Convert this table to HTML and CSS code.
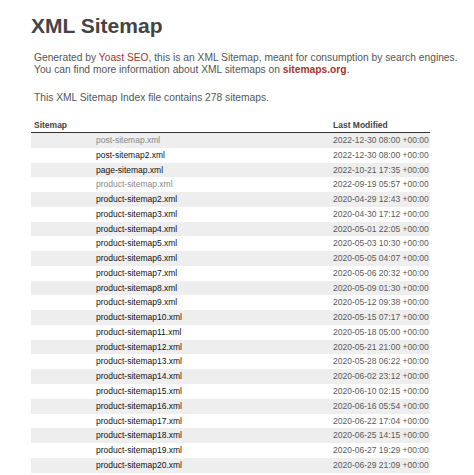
FILE: index.html
```html
<!DOCTYPE html>
<html>
<head>
<meta charset="utf-8">
<title>XML Sitemap</title>
<link rel="stylesheet" href="styles.css">
</head>
<body>
<div class="page">
  <h1 class="title">XML Sitemap</h1>
  <p class="intro">Generated by <a class="brand" href="#">Yoast SEO</a>, this is an XML Sitemap, meant for consumption by search engines.<br>You can find more information about XML sitemaps on <a class="brand strong" href="#">sitemaps.org</a>.</p>
  <p class="count">This XML Sitemap Index file contains 278 sitemaps.</p>
  <table class="sitemap">
    <thead>
      <tr><th class="col-loc">Sitemap</th><th class="col-mod">Last Modified</th></tr>
    </thead>
    <tbody>
      <tr><td class="loc"><a class="visited" href="#">post-sitemap.xml</a></td><td class="mod">2022-12-30 08:00 +00:00</td></tr>
      <tr><td class="loc"><a href="#">post-sitemap2.xml</a></td><td class="mod">2022-12-30 08:00 +00:00</td></tr>
      <tr><td class="loc"><a href="#">page-sitemap.xml</a></td><td class="mod">2022-10-21 17:35 +00:00</td></tr>
      <tr><td class="loc"><a class="visited" href="#">product-sitemap.xml</a></td><td class="mod">2022-09-19 05:57 +00:00</td></tr>
      <tr><td class="loc"><a href="#">product-sitemap2.xml</a></td><td class="mod">2020-04-29 12:43 +00:00</td></tr>
      <tr><td class="loc"><a href="#">product-sitemap3.xml</a></td><td class="mod">2020-04-30 17:12 +00:00</td></tr>
      <tr><td class="loc"><a href="#">product-sitemap4.xml</a></td><td class="mod">2020-05-01 22:05 +00:00</td></tr>
      <tr><td class="loc"><a href="#">product-sitemap5.xml</a></td><td class="mod">2020-05-03 10:30 +00:00</td></tr>
      <tr><td class="loc"><a href="#">product-sitemap6.xml</a></td><td class="mod">2020-05-05 04:07 +00:00</td></tr>
      <tr><td class="loc"><a href="#">product-sitemap7.xml</a></td><td class="mod">2020-05-06 20:32 +00:00</td></tr>
      <tr><td class="loc"><a href="#">product-sitemap8.xml</a></td><td class="mod">2020-05-09 01:30 +00:00</td></tr>
      <tr><td class="loc"><a href="#">product-sitemap9.xml</a></td><td class="mod">2020-05-12 09:38 +00:00</td></tr>
      <tr><td class="loc"><a href="#">product-sitemap10.xml</a></td><td class="mod">2020-05-15 07:17 +00:00</td></tr>
      <tr><td class="loc"><a href="#">product-sitemap11.xml</a></td><td class="mod">2020-05-18 05:00 +00:00</td></tr>
      <tr><td class="loc"><a href="#">product-sitemap12.xml</a></td><td class="mod">2020-05-21 21:00 +00:00</td></tr>
      <tr><td class="loc"><a href="#">product-sitemap13.xml</a></td><td class="mod">2020-05-28 06:22 +00:00</td></tr>
      <tr><td class="loc"><a href="#">product-sitemap14.xml</a></td><td class="mod">2020-06-02 23:12 +00:00</td></tr>
      <tr><td class="loc"><a href="#">product-sitemap15.xml</a></td><td class="mod">2020-06-10 02:15 +00:00</td></tr>
      <tr><td class="loc"><a href="#">product-sitemap16.xml</a></td><td class="mod">2020-06-16 05:54 +00:00</td></tr>
      <tr><td class="loc"><a href="#">product-sitemap17.xml</a></td><td class="mod">2020-06-22 17:04 +00:00</td></tr>
      <tr><td class="loc"><a href="#">product-sitemap18.xml</a></td><td class="mod">2020-06-25 14:15 +00:00</td></tr>
      <tr><td class="loc"><a href="#">product-sitemap19.xml</a></td><td class="mod">2020-06-27 19:29 +00:00</td></tr>
      <tr><td class="loc"><a href="#">product-sitemap20.xml</a></td><td class="mod">2020-06-29 21:09 +00:00</td></tr>
    </tbody>
  </table>
</div>
</body>
</html>
```

FILE: styles.css
```css
html, body {
  margin: 0;
  padding: 0;
  background: #fff;
}

body {
  font-family: "Liberation Sans", Arial, sans-serif;
  color: #555;
  overflow: hidden;
}

.page {
  padding: 14px 0 0 31px;
}

.title {
  margin: 0;
  font-size: 21px;
  line-height: 24px;
  font-weight: bold;
  color: #444;
}

.intro {
  margin: 14px 0 0 3px;
  font-size: 10.25px;
  line-height: 12px;
  color: #555;
}

.count {
  margin: 16px 0 0 3px;
  font-size: 10.25px;
  line-height: 12px;
  color: #555;
}

.brand {
  color: #a8332f;
  text-decoration: none;
}

.strong {
  font-weight: bold;
}

.sitemap {
  margin-top: 15px;
  width: 399px;
  border-collapse: collapse;
  border-spacing: 0;
}

.sitemap th {
  text-align: left;
  font-size: 8.5px;
  line-height: 13px;
  font-weight: bold;
  color: #444;
  border-bottom: 1px solid #333;
  padding: 0;
}

.col-loc {
  width: 299px;
  padding-left: 3px !important;
}

.sitemap td {
  font-size: 8.5px;
  line-height: 14.77px;
  padding: 0;
  white-space: nowrap;
}

.sitemap tbody tr:nth-child(odd) td {
  background: #eee;
}

.loc {
  padding-left: 65px !important;
}

.loc a {
  color: #111;
  text-decoration: none;
}

.loc a.visited {
  color: #888;
}

.mod {
  color: #5a5a5a;
}
```
